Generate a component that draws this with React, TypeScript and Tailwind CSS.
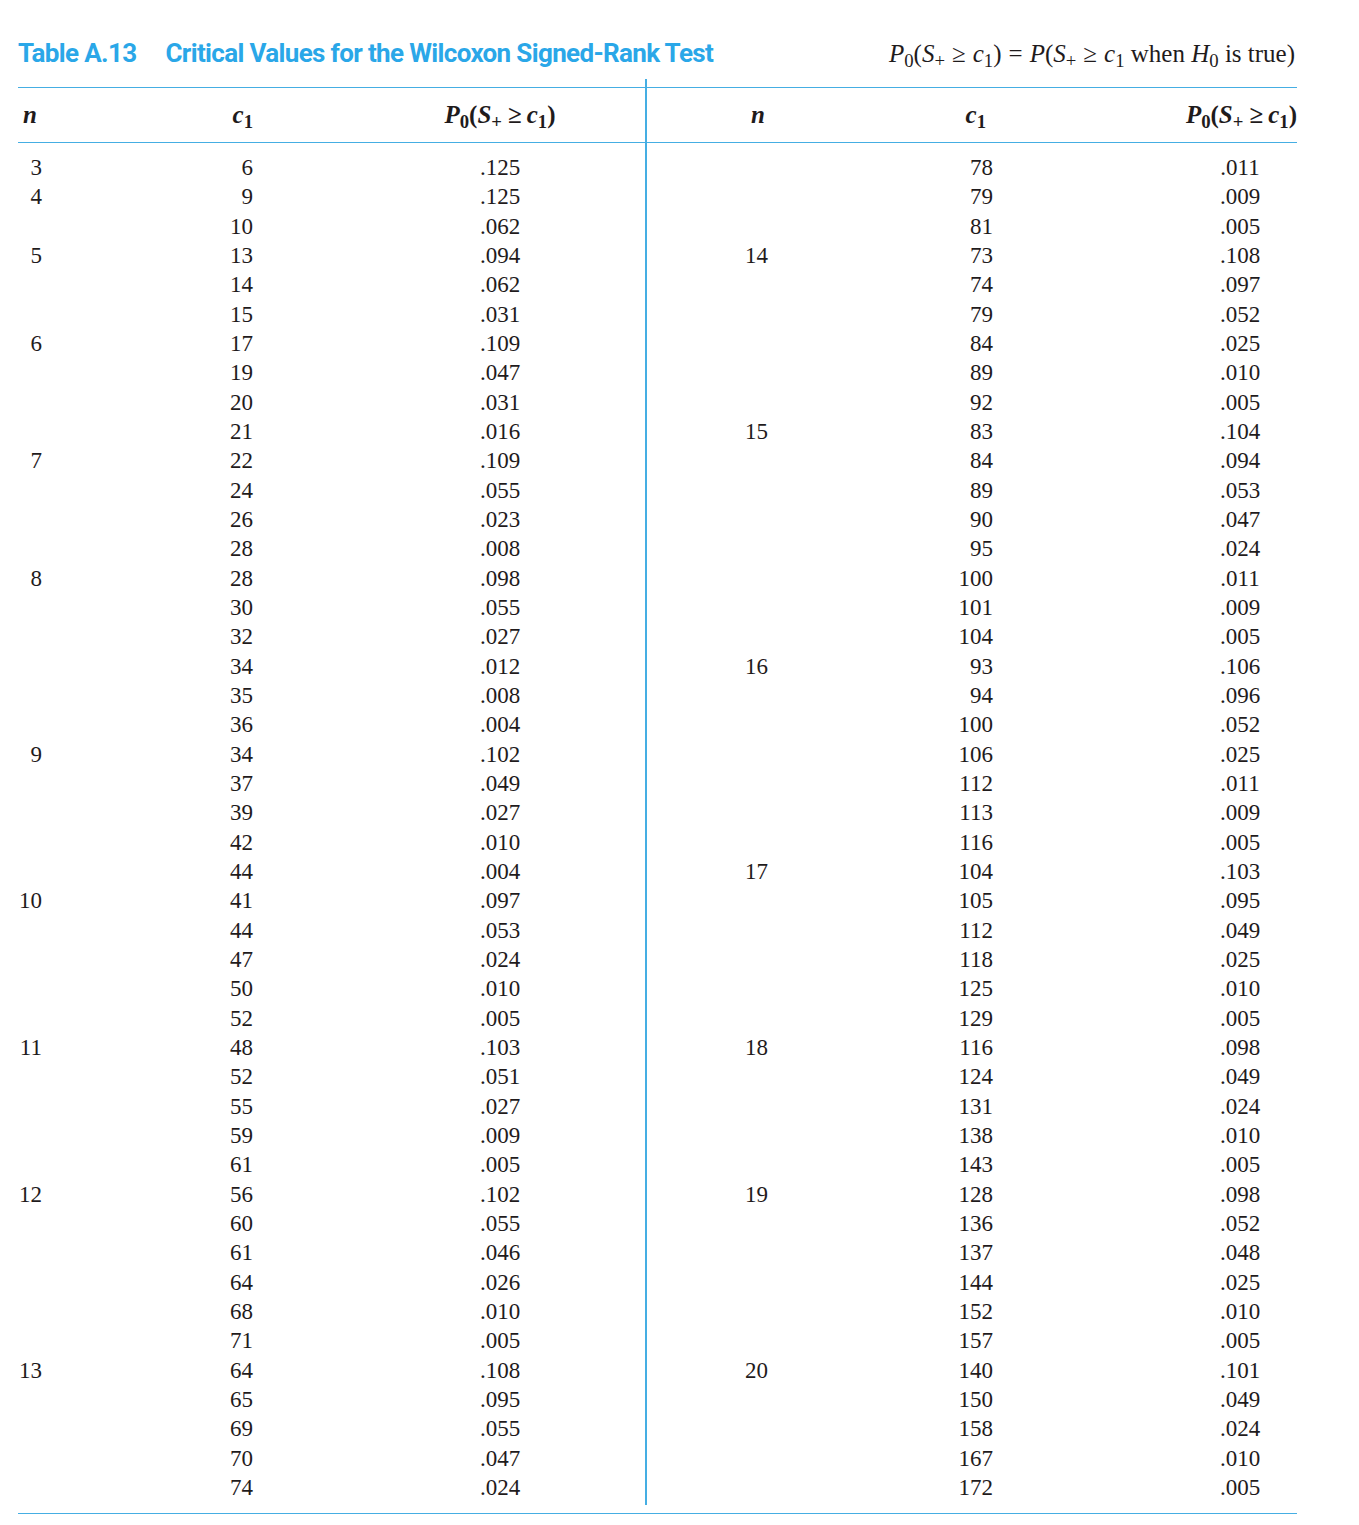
import React from "react";

type Row = [string, string, string];

const left: Row[] = [
  ["3", "6", ".125"],
  ["4", "9", ".125"],
  ["", "10", ".062"],
  ["5", "13", ".094"],
  ["", "14", ".062"],
  ["", "15", ".031"],
  ["6", "17", ".109"],
  ["", "19", ".047"],
  ["", "20", ".031"],
  ["", "21", ".016"],
  ["7", "22", ".109"],
  ["", "24", ".055"],
  ["", "26", ".023"],
  ["", "28", ".008"],
  ["8", "28", ".098"],
  ["", "30", ".055"],
  ["", "32", ".027"],
  ["", "34", ".012"],
  ["", "35", ".008"],
  ["", "36", ".004"],
  ["9", "34", ".102"],
  ["", "37", ".049"],
  ["", "39", ".027"],
  ["", "42", ".010"],
  ["", "44", ".004"],
  ["10", "41", ".097"],
  ["", "44", ".053"],
  ["", "47", ".024"],
  ["", "50", ".010"],
  ["", "52", ".005"],
  ["11", "48", ".103"],
  ["", "52", ".051"],
  ["", "55", ".027"],
  ["", "59", ".009"],
  ["", "61", ".005"],
  ["12", "56", ".102"],
  ["", "60", ".055"],
  ["", "61", ".046"],
  ["", "64", ".026"],
  ["", "68", ".010"],
  ["", "71", ".005"],
  ["13", "64", ".108"],
  ["", "65", ".095"],
  ["", "69", ".055"],
  ["", "70", ".047"],
  ["", "74", ".024"],
];

const right: Row[] = [
  ["", "78", ".011"],
  ["", "79", ".009"],
  ["", "81", ".005"],
  ["14", "73", ".108"],
  ["", "74", ".097"],
  ["", "79", ".052"],
  ["", "84", ".025"],
  ["", "89", ".010"],
  ["", "92", ".005"],
  ["15", "83", ".104"],
  ["", "84", ".094"],
  ["", "89", ".053"],
  ["", "90", ".047"],
  ["", "95", ".024"],
  ["", "100", ".011"],
  ["", "101", ".009"],
  ["", "104", ".005"],
  ["16", "93", ".106"],
  ["", "94", ".096"],
  ["", "100", ".052"],
  ["", "106", ".025"],
  ["", "112", ".011"],
  ["", "113", ".009"],
  ["", "116", ".005"],
  ["17", "104", ".103"],
  ["", "105", ".095"],
  ["", "112", ".049"],
  ["", "118", ".025"],
  ["", "125", ".010"],
  ["", "129", ".005"],
  ["18", "116", ".098"],
  ["", "124", ".049"],
  ["", "131", ".024"],
  ["", "138", ".010"],
  ["", "143", ".005"],
  ["19", "128", ".098"],
  ["", "136", ".052"],
  ["", "137", ".048"],
  ["", "144", ".025"],
  ["", "152", ".010"],
  ["", "157", ".005"],
  ["20", "140", ".101"],
  ["", "150", ".049"],
  ["", "158", ".024"],
  ["", "167", ".010"],
  ["", "172", ".005"],
];

function HeadC() {
  return (
    <span>
      <i>c</i>
      <sub className="not-italic">1</sub>
    </span>
  );
}

function HeadP() {
  return (
    <span className="whitespace-nowrap">
      <i>P</i>
      <sub>0</sub>(<i>S</i>
      <sub>+</sub>
      <span className="ml-[6px] mr-[5px]">≥</span>
      <i>c</i>
      <sub>1</sub>)
    </span>
  );
}

function Op({ children }: { children: React.ReactNode }) {
  return <span className="mx-[7px]">{children}</span>;
}

function Formula() {
  return (
    <span className="whitespace-nowrap">
      <i>P</i>
      <sub>0</sub>(<i>S</i>
      <sub>+</sub>
      <Op>≥</Op>
      <i>c</i>
      <sub>1</sub>)<Op>=</Op>
      <i>P</i>(<i>S</i>
      <sub>+</sub>
      <Op>≥</Op>
      <i>c</i>
      <sub>1</sub> when <i>H</i>
      <sub>0</sub> is true)
    </span>
  );
}

const serif = "font-['Liberation_Serif','Times_New_Roman',serif]";

export default function App() {
  return (
    <div className="bg-white min-h-[1525px] w-[1359px] text-[#1f1b1c]">
      <div className="ml-[18px] w-[1279px]">
        {/* Title row */}
        <div className="h-[79px] flex items-baseline justify-between pt-[40px]">
          <div className="flex items-baseline font-['Roboto',sans-serif] font-bold text-[#2aa7e8] text-[26px] leading-none tracking-[-0.65px]">
            <span>Table A.13</span>
            <span className="ml-[29px]">Critical Values for the Wilcoxon Signed-Rank Test</span>
          </div>
          <div className={`${serif} text-[25px] leading-none pr-[2px]`}>
            <Formula />
          </div>
        </div>

        {/* Table halves */}
        <div className={`flex ${serif} text-[23px]`}>
          {/* Left half */}
          <div className="w-[629px] border-r-2 border-[#45aee3] pt-[8px] pb-[3px]">
            <div className="h-[56px] flex items-center border-y-[1.5px] border-[#45aee3] font-bold text-[25px]">
              <div className="w-[24px] pl-[5px] text-left italic">n</div>
              <div className="w-[211px] text-right">
                <HeadC />
              </div>
              <div className="ml-[102px] w-[290px] text-center">
                <HeadP />
              </div>
            </div>
            <div className="pt-[10px]">
              {left.map((r, i) => (
                <div key={i} className="h-[29.33px] flex items-center leading-none">
                  <div className="w-[24px] text-right">{r[0]}</div>
                  <div className="w-[211px] text-right">{r[1]}</div>
                  <div className="ml-[102px] w-[290px] text-center">{r[2]}</div>
                </div>
              ))}
            </div>
          </div>

          {/* Right half */}
          <div className="w-[650px] pt-[8px] pb-[3px]">
            <div className="h-[56px] flex items-center border-y-[1.5px] border-[#45aee3] font-bold text-[25px]">
              <div className="w-[121px] pr-[3px] text-right italic">n</div>
              <div className="w-[225px] pr-[7px] text-right">
                <HeadC />
              </div>
              <div className="ml-[187px] w-[117px] text-right">
                <HeadP />
              </div>
            </div>
            <div className="pt-[10px]">
              {right.map((r, i) => (
                <div key={i} className="h-[29.33px] flex items-center leading-none">
                  <div className="w-[121px] text-right">{r[0]}</div>
                  <div className="w-[225px] text-right">{r[1]}</div>
                  <div className="ml-[190px] w-[114px] text-center">{r[2]}</div>
                </div>
              ))}
            </div>
          </div>
        </div>

        {/* Bottom rule */}
        <div className="mt-[8px] border-t-[1.5px] border-[#45aee3]" />
      </div>
    </div>
  );
}
